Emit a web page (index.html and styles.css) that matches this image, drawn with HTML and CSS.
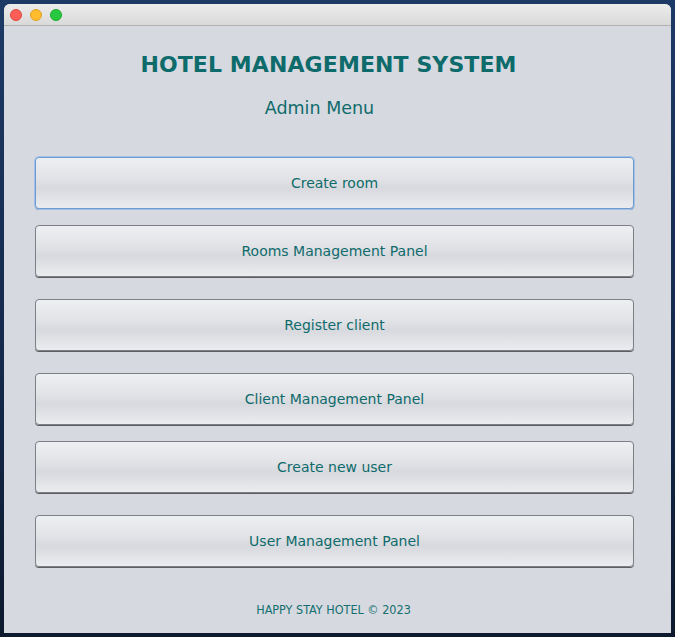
FILE: index.html
```html
<!DOCTYPE html>
<html lang="en">
<head>
    <meta charset="UTF-8">
    <title>Hotel Management System</title>
    <link rel="stylesheet" href="styles.css">
</head>
<body>
    <div id="window">
        <div id="titlebar">
            <span class="light red"></span>
            <span class="light yellow"></span>
            <span class="light green"></span>
        </div>
        <div id="content">
            <h1 id="title">HOTEL MANAGEMENT SYSTEM</h1>
            <h2 id="subtitle">Admin Menu</h2>
            <div id="menu">
                <button class="menu-btn focused">Create room</button>
                <button class="menu-btn">Rooms Management Panel</button>
                <button class="menu-btn wide-gap">Register client</button>
                <button class="menu-btn wide-gap">Client Management Panel</button>
                <button class="menu-btn">Create new user</button>
                <button class="menu-btn wide-gap">User Management Panel</button>
            </div>
            <p id="footer">HAPPY STAY HOTEL &copy; 2023</p>
        </div>
    </div>
</body>
</html>
```

FILE: styles.css
```css
html, body {
    margin: 0;
    height: 100%;
}
body {
    background: linear-gradient(180deg, #1d3a66 0%, #14284a 60%, #0d1a2e 100%);
    padding: 4px;
    box-sizing: border-box;
}
#window {
    width: 667px;
    height: 629px;
    background: #d6d9e0;
    border-radius: 6px 6px 0 0;
    overflow: hidden;
    display: flex;
    flex-direction: column;
}
#titlebar {
    height: 21px;
    flex: none;
    background: linear-gradient(180deg, #ececec, #d9d9d9);
    border-bottom: 1px solid #b1b1b1;
    display: flex;
    align-items: center;
    gap: 8px;
    padding-left: 6px;
}
.light {
    width: 12px;
    height: 12px;
    border-radius: 50%;
    box-sizing: border-box;
}
.red { background: #fe5f57; border: 1px solid #e1453e; }
.yellow { background: #febc2e; border: 1px solid #dfa023; }
.green { background: #28c840; border: 1px solid #1aab29; }

#content {
    flex: 1;
    display: flex;
    flex-direction: column;
    align-items: center;
    font-family: "DejaVu Sans", Verdana, sans-serif;
    color: #0e6b6b;
}
#title {
    margin: 24px 18px 0 0;
    font-size: 22px;
    font-weight: bold;
    letter-spacing: 0.1px;
    line-height: 30px;
}
#subtitle {
    margin: 17px 36px 0 0;
    font-size: 17.5px;
    font-weight: normal;
    line-height: 22px;
}
#menu {
    margin: 38px 6px 0 0;
    width: 599px;
    display: flex;
    flex-direction: column;
    gap: 16px;
}
.menu-btn {
    height: 52px;
    padding-bottom: 2px;
    border: 1px solid #7d7f84;
    border-radius: 4px;
    background: linear-gradient(180deg, #eeeff2 0%, #e2e3e7 40%, #d7d9de 60%, #eaecef 100%);
    font-family: "DejaVu Sans", Verdana, sans-serif;
    font-size: 14px;
    color: #0e6b6b;
    box-shadow: 0 1px 0 #5b5d62;
    cursor: pointer;
}
.menu-btn.wide-gap {
    margin-top: 6px;
}
.menu-btn.focused {
    border-color: #6f9ad0;
    box-shadow: 0 0 0 1px #a4c2e8, 0 1px 0 #4d6e99;
}
#footer {
    margin: 35px 8px 0 0;
    font-family: "DejaVu Sans", sans-serif;
    font-stretch: condensed;
    font-size: 12.5px;
    color: #14706f;
}
```
